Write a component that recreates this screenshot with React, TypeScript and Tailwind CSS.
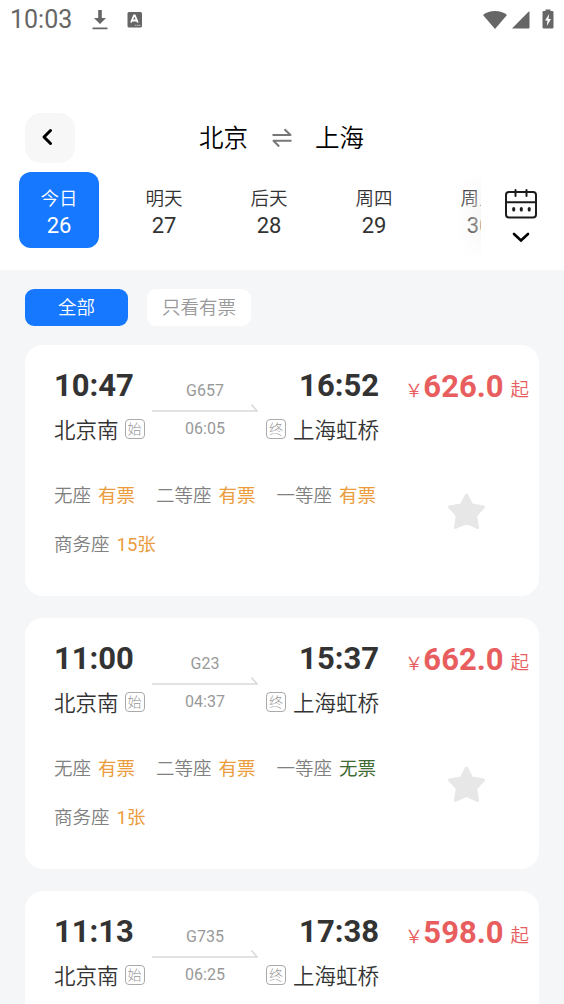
interface DateItem {
  label: string;
  day: string;
}

interface Seat {
  name: string;
  status: string;
  soldOut?: boolean;
}

interface Train {
  code: string;
  depart: string;
  arrive: string;
  duration: string;
  price: string;
  seats: Seat[];
}

const dates: DateItem[] = [
  { label: '今日', day: '26' },
  { label: '明天', day: '27' },
  { label: '后天', day: '28' },
  { label: '周四', day: '29' },
  { label: '周五', day: '30' },
];

const trains: Train[] = [
  {
    code: 'G657',
    depart: '10:47',
    arrive: '16:52',
    duration: '06:05',
    price: '626.0',
    seats: [
      { name: '无座', status: '有票' },
      { name: '二等座', status: '有票' },
      { name: '一等座', status: '有票' },
      { name: '商务座', status: '15张' },
    ],
  },
  {
    code: 'G23',
    depart: '11:00',
    arrive: '15:37',
    duration: '04:37',
    price: '662.0',
    seats: [
      { name: '无座', status: '有票' },
      { name: '二等座', status: '有票' },
      { name: '一等座', status: '无票', soldOut: true },
      { name: '商务座', status: '1张' },
    ],
  },
  {
    code: 'G735',
    depart: '11:13',
    arrive: '17:38',
    duration: '06:25',
    price: '598.0',
    seats: [],
  },
];

function StatusBar() {
  return (
    <div className="flex h-10 items-center px-2.5 text-[#666]">
      <span className="w-[62px] text-[25px] leading-10">10:03</span>
      <svg className="ml-[19px] h-[22px] w-[18px]" viewBox="0 0 18 22" fill="currentColor">
        <path d="M7.200 1h3.600v8h4.200l-6 6-6-6h4.200zM1.500 18.500h15v1.800h-15z" />
      </svg>
      <svg className="ml-[18px] h-4 w-4" viewBox="0 0 16 16">
        <rect x="0.5" y="0" width="14.500" height="15.500" rx="1.5" fill="currentColor" />
        <path
          d="M4 10.500 7 3.500h.8l3 7M5.300 8.500h4.400"
          fill="none"
          stroke="#fff"
          strokeWidth="1.8"
        />
        <path d="M8 13.300h6" stroke="#ccc" strokeWidth="1" strokeDasharray="1.4 .6" />
      </svg>
      <svg className="ml-auto h-[20px] w-[26px]" viewBox="0 0 26 20" fill="currentColor">
        <path d="M13 19 1 5C4.300 2.100 8.400 1 13 1s8.700 1.100 12 4z" />
      </svg>
      <svg className="ml-1 h-[18px] w-[18px]" viewBox="0 0 18 18" fill="currentColor">
        <path d="M0 17.500 16.500.8q1-.8 1 .4v15.500q0 .8-.8.8z" />
      </svg>
      <svg className="mb-0.5 ml-3 h-5 w-3" viewBox="0 0 12 20">
        <path
          d="M3.500 2V.5h5V2h1.700Q11.500 2 11.500 3.300v14.900q0 1.300-1.300 1.300H1.800Q.5 19.500.5 18.200V3.300Q.5 2 1.800 2z"
          fill="currentColor"
        />
        <path d="M7.200 5 3 11.500h2.500L4.800 17 9 10H6.500z" fill="#fff" />
      </svg>
    </div>
  );
}

function CalendarIcon() {
  return (
    <svg
      className="h-[31px] w-[34px]"
      viewBox="0 0 34 31"
      fill="none"
      stroke="#1c1c1c"
      strokeWidth="2"
      strokeLinecap="round"
    >
      <rect x="2" y="4" width="30" height="25.500" rx="3" />
      <path d="M2 14.200h30M11.500 2v6M22.500 2v6" />
      <path d="M9.700 20.500v1.500M17.300 20.500v1.500M25.200 20.500v1.500" strokeWidth="3" />
    </svg>
  );
}

function Header() {
  return (
    <div className="flex h-[50px] items-center pl-[25px]">
      <button className="flex size-[50px] items-center justify-center rounded-[16px] bg-[#f7f7f7]">
        <svg
          className="mr-1.5 mb-0.5 h-[18px] w-3"
          viewBox="0 0 12 18"
          fill="none"
          stroke="#000"
          strokeWidth="3"
          strokeLinecap="round"
          strokeLinejoin="round"
        >
          <path d="M9.500 2.500 3 9l6.500 6.500" />
        </svg>
      </button>
      <div className="ml-[124px] flex items-center text-[24.500px] leading-[50px] font-[350] text-black">
        <span className="pt-0.5">北京</span>
        <svg
          className="ml-6 h-[20px] w-5"
          viewBox="0 0 20 20"
          fill="none"
          stroke="#777"
          strokeWidth="2"
          strokeLinejoin="round"
        >
          <path d="M.5 7h18L12.500 1.200M19.500 12.800h-18l5.700 5.700" />
        </svg>
        <span className="ml-[23px] pt-0.5">上海</span>
      </div>
    </div>
  );
}

function DateBar() {
  return (
    <div className="mt-[9px] flex h-[97px] pl-[19px]">
      {/* 日期列表 */}
      <div className="relative flex w-[462px] gap-[25px] overflow-hidden">
        {dates.map((item, index) => (
          <div
            key={item.day}
            className={
              index === 0
                ? 'flex h-[76px] w-20 shrink-0 flex-col items-center rounded-[12px] bg-[#1677ff] text-white'
                : 'flex h-[76px] w-20 shrink-0 flex-col items-center text-[#333]'
            }
          >
            <span className="mt-[14px] text-[18.500px] leading-[26px] font-[350]">{item.label}</span>
            <span className="text-[22px] leading-[28px]">{item.day}</span>
          </div>
        ))}
        <div className="absolute top-0 right-0 h-[88px] w-6 bg-linear-to-r from-white/0 to-[#f1f1f1]/60 mask-y-from-60%" />
      </div>
      {/* 日历入口 */}
      <div className="flex w-[83px] flex-col items-center pt-4 pr-[3px]">
        <CalendarIcon />
        <svg
          className="mt-3 h-3 w-[18px]"
          viewBox="0 0 18 12"
          fill="none"
          stroke="#000"
          strokeWidth="2.600"
          strokeLinecap="round"
        >
          <path d="M2 3 9 9.500 16 3" />
        </svg>
      </div>
    </div>
  );
}

function StationBadge({ text }: { text: string }) {
  return (
    <span className="mb-1 flex size-[20px] items-center justify-center rounded-[4px] border border-[#aaa] text-[14px] leading-none font-light text-[#999]">
      {text}
    </span>
  );
}

function TrainCard({ train }: { train: Train }) {
  return (
    <div className="h-[251px] shrink-0 rounded-[18px] bg-white pt-[21px] pr-2.5 pl-[29px]">
      <div className="flex text-[#333]">
        {/* 出发 */}
        <div className="w-[98px]">
          <div className="text-[31px] leading-10 font-bold">{train.depart}</div>
          <div className="mt-[5px] flex h-10 items-center gap-1.5 text-[21.500px] font-[350]">
            <span className="whitespace-nowrap">北京南</span>
            <StationBadge text="始" />
          </div>
        </div>
        {/* 车次与历时 */}
        <div className="flex w-[106px] flex-col items-center text-[16px] leading-5 text-[#999]">
          <span className="mt-[15px]">{train.code}</span>
          <svg
            className="mt-[3px] h-2 w-[106px]"
            viewBox="0 0 106 8"
            fill="none"
            stroke="#d9d9d9"
            strokeWidth="1.500"
          >
            <path d="M0 7h105l-5.500-6.500" />
          </svg>
          <span className="mt-[7px]">{train.duration}</span>
        </div>
        {/* 到达 */}
        <div className="flex w-[121px] flex-col items-end">
          <div className="text-[31px] leading-10 font-bold">{train.arrive}</div>
          <div className="mt-[5px] flex h-10 items-center gap-[7px] text-[21.500px] font-[350]">
            <StationBadge text="终" />
            <span className="whitespace-nowrap">上海虹桥</span>
          </div>
        </div>
        {/* 票价 */}
        <div className="mt-px ml-auto flex h-10 items-baseline text-[18.500px] font-[350] text-[#e85d5d]">
          <span>{'\uffe5'}</span>
          <span className="text-[31px] leading-10 font-bold">{train.price}</span>
          <span className="ml-[7px] -translate-y-px">起</span>
        </div>
      </div>
      {/* 余票 */}
      <div className="mt-[21px] flex">
        <div className="flex w-[350px] flex-wrap gap-x-[21px]">
          {train.seats.map((seat) => (
            <div
              key={seat.name}
              className="flex h-[49px] items-center gap-[7px] text-[18.500px] whitespace-nowrap"
            >
              <span className="font-[350] text-[#808080]">{seat.name}</span>
              <span className={seat.soldOut ? 'text-[#3f6b35]' : 'text-[#eb9c3c]'}>
                {seat.status}
              </span>
            </div>
          ))}
        </div>
        <svg className="mt-[20px] ml-[43px] h-[38px] w-[39px]" viewBox="0 0 39 38">
          <path
            d="m19.500 3 5.300 10 11.700 2-7.800 8.500 1.800 12-11-5-11 5 1.800-12L2.500 15l11.700-2z"
            fill="#e7e7e7"
            stroke="#e7e7e7"
            strokeWidth="3"
            strokeLinejoin="round"
          />
        </svg>
      </div>
    </div>
  );
}

export default function App() {
  return (
    <div className="flex h-[1004px] w-[564px] flex-col overflow-hidden bg-[#f5f6f8] font-['Roboto','Noto_Sans_CJK_SC',sans-serif]">
      <div className="h-[270px] shrink-0 bg-white">
        <StatusBar />
        <div className="h-[73px]" />
        <Header />
        <DateBar />
      </div>
      {/* 筛选 */}
      <div className="mt-[19px] flex h-[37px] shrink-0 gap-[19px] px-[25px] text-[18.500px] font-[350]">
        <button className="w-[103px] rounded-[9px] bg-[#1677ff] pt-0.5 text-white">全部</button>
        <button className="w-[104px] rounded-[9px] bg-white pt-0.5 text-[#999]">只看有票</button>
      </div>
      {/* 车次列表 */}
      <div className="mt-[19px] flex flex-col gap-[22px] px-[25px]">
        {trains.map((train) => (
          <TrainCard key={train.code} train={train} />
        ))}
      </div>
    </div>
  );
}
